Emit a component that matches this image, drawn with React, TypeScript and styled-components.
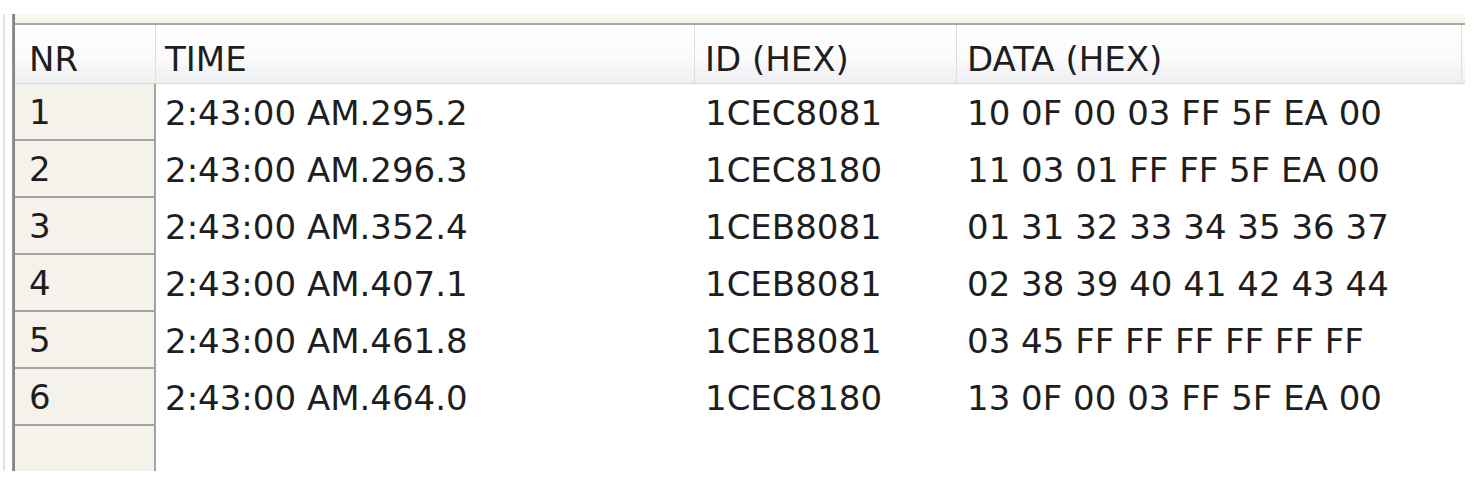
import React from "react";
import styled, { createGlobalStyle } from "styled-components";

const Global = createGlobalStyle`
  html, body { margin: 0; padding: 0; background: #ffffff; }
  body { font-family: "DejaVu Sans", Verdana, sans-serif; }
`;

const Page = styled.div`
  width: 1480px;
  height: 490px;
  background: #ffffff;
  padding-top: 14px;
  box-sizing: border-box;
`;

const Frame = styled.div`
  display: flex;
  height: 457px;
`;

const OuterEdge = styled.div`
  width: 2px;
  margin-left: 3px;
  background: #e2e2e2;
`;

const InnerEdge = styled.div`
  width: 3px;
  margin-left: 7px;
  background: linear-gradient(to right, #9a9a9a, #7c7c7c);
`;

const Grid = styled.div`
  width: 1450px;
  display: flex;
  flex-direction: column;
`;

const TopBand = styled.div`
  height: 9px;
  background: linear-gradient(to bottom, #fbfaf6, #f3f0e6);
  border-bottom: 2px solid #a9a7a0;
`;

const columns = "141px 539px 262px 505px 3px";

const HeaderRow = styled.div`
  display: grid;
  grid-template-columns: ${columns};
  height: 59px;
  background: linear-gradient(to bottom, #ffffff 0%, #fbfbfc 55%, #eeeff2 100%);
  border-bottom: 1px solid #d9d9d9;
  box-sizing: border-box;
`;

const HeaderCell = styled.div<{ $pad: number; $last?: boolean }>`
  display: flex;
  align-items: center;
  padding-left: ${(p) => p.$pad}px;
  padding-top: 10px;
  box-sizing: border-box;
  border-right: ${(p) => (p.$last ? "none" : "1px solid #dedede")};
  font-size: 34px;
  color: #1e1e1e;
  white-space: nowrap;
`;

const Row = styled.div<{ $h: number }>`
  display: grid;
  grid-template-columns: ${columns};
  height: ${(p) => p.$h}px;
`;

const NrCell = styled.div`
  display: flex;
  align-items: center;
  padding-left: 14px;
  box-sizing: border-box;
  background: #f4f2eb;
  border-right: 2px solid #a3a3a3;
  border-bottom: 2px solid #a3a3a3;
  font-size: 34px;
  color: #1e1e1e;
`;

const EmptyNr = styled.div`
  background: #f4f2eb;
  border-right: 2px solid #a3a3a3;
`;

const Cell = styled.div<{ $pad: number }>`
  display: flex;
  align-items: center;
  padding-left: ${(p) => p.$pad}px;
  box-sizing: border-box;
  font-size: 34px;
  color: #1e1e1e;
  white-space: nowrap;
  background: #ffffff;
`;

const rows = [
  ["1", "2:43:00 AM.295.2", "1CEC8081", "10 0F 00 03 FF 5F EA 00"],
  ["2", "2:43:00 AM.296.3", "1CEC8180", "11 03 01 FF FF 5F EA 00"],
  ["3", "2:43:00 AM.352.4", "1CEB8081", "01 31 32 33 34 35 36 37"],
  ["4", "2:43:00 AM.407.1", "1CEB8081", "02 38 39 40 41 42 43 44"],
  ["5", "2:43:00 AM.461.8", "1CEB8081", "03 45 FF FF FF FF FF FF"],
  ["6", "2:43:00 AM.464.0", "1CEC8180", "13 0F 00 03 FF 5F EA 00"],
];

export default function App() {
  return (
    <Page>
      <Global />
      <Frame>
        <OuterEdge />
        <InnerEdge />
        <Grid>
          <TopBand />
          <HeaderRow>
            <HeaderCell $pad={14}>NR</HeaderCell>
            <HeaderCell $pad={9}>TIME</HeaderCell>
            <HeaderCell $pad={10}>ID (HEX)</HeaderCell>
            <HeaderCell $pad={10}>DATA (HEX)</HeaderCell>
            <HeaderCell $pad={0} $last />
          </HeaderRow>
          {rows.map((r) => (
            <Row key={r[0]} $h={57}>
              <NrCell>{r[0]}</NrCell>
              <Cell $pad={9}>{r[1]}</Cell>
              <Cell $pad={10}>{r[2]}</Cell>
              <Cell $pad={10}>{r[3]}</Cell>
              <Cell $pad={0} />
            </Row>
          ))}
          <Row $h={45}>
            <EmptyNr />
            <Cell $pad={0} />
            <Cell $pad={0} />
            <Cell $pad={0} />
            <Cell $pad={0} />
          </Row>
        </Grid>
      </Frame>
    </Page>
  );
}
